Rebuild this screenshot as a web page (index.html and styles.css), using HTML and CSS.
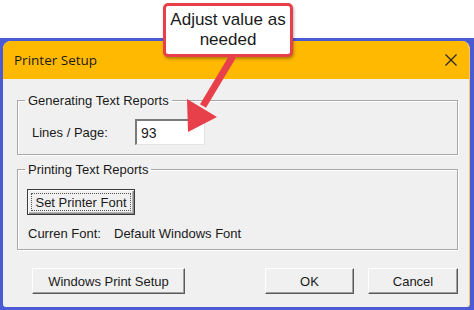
FILE: index.html
```html
<!DOCTYPE html>
<html>
<head>
<meta charset="utf-8">
<link rel="stylesheet" href="styles.css">
</head>
<body>
<div class="top"></div>
<div class="frame">
  <div class="dialog">
    <div class="titlebar">
      <span class="title">Printer Setup</span>
      <svg class="close" width="12" height="12" viewBox="0 0 12 12"><path d="M0.5 0.5L11.5 11.5M11.5 0.5L0.5 11.5" stroke="#2a2a2a" stroke-width="1.3" fill="none"/></svg>
    </div>
    <div class="content">
      <fieldset class="group g1">
        <legend>Generating Text Reports</legend>
        <div class="g1-inner">
          <span class="lbl">Lines / Page:</span>
          <div class="input">93</div>
        </div>
      </fieldset>
      <fieldset class="group g2">
        <legend>Printing Text Reports</legend>
        <div class="g2-inner">
          <div class="btn default"><span class="focus">Set Printer Font</span></div>
          <div class="fontrow"><span class="flbl">Curren Font:</span><span>Default Windows Font</span></div>
        </div>
      </fieldset>
      <div class="buttons">
        <div class="btn wide">Windows Print Setup</div>
        <div class="spacer"></div>
        <div class="btn ok">OK</div>
        <div class="btn cancel">Cancel</div>
      </div>
    </div>
  </div>
</div>
<div class="callout">Adjust value as<br>needed</div>
<svg class="arrow" width="474" height="310" viewBox="0 0 474 310">
  <line x1="233" y1="56" x2="203" y2="106" stroke="#e8404a" stroke-width="7"/>
  <polygon points="187,99 217,117 188,132" fill="#e8404a"/>
</svg>
</body>
</html>
```
FILE: styles.css
```css
html, body {
  margin: 0;
  padding: 0;
  background: #ffffff;
  width: 474px;
  height: 310px;
  overflow: hidden;
  font-family: "Liberation Sans", Arial, sans-serif;
  font-size: 13px;
  color: #1a1a1a;
}
.top {
  height: 38px;
}
.frame {
  height: 272px;
  box-sizing: border-box;
  background: #4a5bd4;
  padding: 3px 4px 3px 3px;
}
.dialog {
  height: 266px;
  background: #f0f0f0;
  border-radius: 8px 8px 3px 3px;
  overflow: hidden;
  border-right: 1px solid #f5c56a;
  box-sizing: border-box;
}
.titlebar {
  height: 38px;
  background: #ffb900;
  display: flex;
  align-items: center;
  justify-content: space-between;
  padding: 0 12px 0 11px;
}
.title {
  font-family: "Open Sans", "Noto Sans", sans-serif;
  font-size: 13.5px;
  color: #1a1a1a;
}
.close {
  display: block;
}
.content {
  padding: 0 11px 0 14px;
}
.group {
  margin: 0;
  padding: 0;
  border: 1px solid #a8a8a8;
  box-shadow: 1px 1px 0 #ffffff, inset 1px 1px 0 #ffffff;
}
.group legend {
  margin-left: 7px;
  padding: 0 3px;
  line-height: 15px;
}
.g1 {
  margin-top: 14px;
}
.g1-inner {
  display: flex;
  align-items: center;
  padding: 11px 0 9px 14px;
}
.lbl {
  width: 103px;
}
.input {
  width: 70px;
  height: 26px;
  box-sizing: border-box;
  background: #ffffff;
  border-top: 2px solid #7a7a7a;
  border-left: 2px solid #7a7a7a;
  border-right: 1px solid #e4e4e4;
  border-bottom: 1px solid #e4e4e4;
  padding: 4px 0 0 4px;
  font-size: 14px;
}
.g2 {
  margin-top: 7px;
}
.g2-inner {
  padding: 12px 0 8px 9px;
}
.btn {
  height: 26px;
  box-sizing: border-box;
  background: #f0f0f0;
  border-top: 1px solid #ffffff;
  border-left: 1px solid #ffffff;
  border-right: 1px solid #5a5a5a;
  border-bottom: 1px solid #5a5a5a;
  box-shadow: inset -1px -1px 0 #a0a0a0;
  display: flex;
  align-items: center;
  justify-content: center;
  font-size: 13px;
  white-space: nowrap;
}
.btn.default {
  width: 108px;
  border: 1px solid #3a3a3a;
  box-shadow: inset 1px 1px 0 #ffffff, inset -1px -1px 0 #8a8a8a, inset -2px -2px 0 #b5b5b5;
  padding: 3px;
  align-items: stretch;
}
.focus {
  flex: 1;
  border: 1px dotted #555;
  display: flex;
  align-items: center;
  justify-content: center;
  font-size: 13px;
}
.fontrow {
  display: flex;
  margin-top: 11px;
  line-height: 15px;
  margin-left: 1px;
}
.flbl {
  width: 86px;
}
.buttons {
  display: flex;
  margin-top: 18px;
  padding-left: 15px;
}
.btn.wide {
  width: 153px;
}
.spacer {
  flex: 1;
}
.btn.ok {
  width: 89px;
}
.btn.cancel {
  width: 90px;
  margin-left: 14px;
}
.callout {
  position: absolute;
  left: 163px;
  top: 3px;
  width: 130px;
  height: 54px;
  box-sizing: border-box;
  background: #ffffff;
  border: 3px solid #e8404a;
  border-radius: 5px;
  box-shadow: 1px 2px 3px rgba(0,0,0,0.3);
  text-align: center;
  font-family: "Liberation Sans", Arial, sans-serif;
  font-size: 17px;
  line-height: 20px;
  padding-top: 4px;
  color: #1a1a1a;
}
.arrow {
  position: absolute;
  left: 0;
  top: 0;
  pointer-events: none;
}
```
